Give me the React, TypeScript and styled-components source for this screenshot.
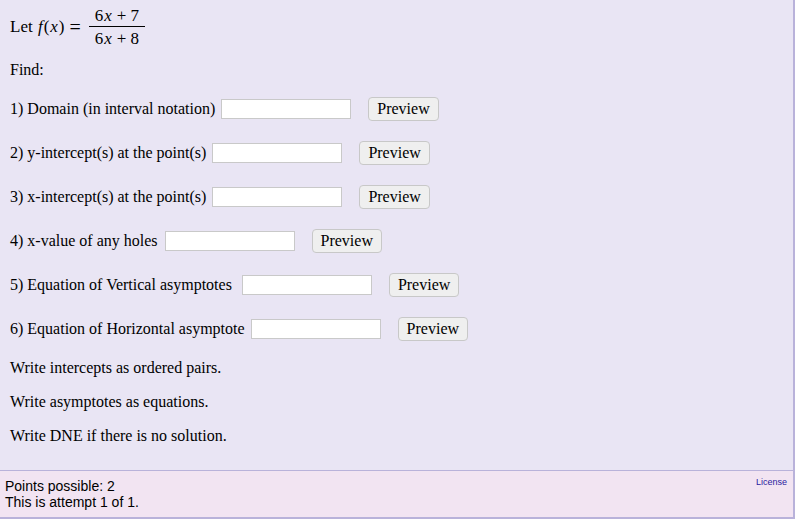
import React from 'react'
import styled, { createGlobalStyle } from 'styled-components'

const GlobalStyle = createGlobalStyle`
  html, body {
    margin: 0;
    padding: 0;
    background: #ffffff;
  }
  body {
    font-family: "Liberation Serif", "Times New Roman", serif;
    font-size: 16px;
    color: #000;
  }
`

const Frame = styled.div`
  width: 793px;
  height: 517px;
  border-right: 2px solid #b9b2da;
  border-bottom: 2px solid #b9b2da;
  background: #e9e5f4;
  display: flex;
  flex-direction: column;
`

const Question = styled.div`
  height: 470px;
  padding-left: 10px;
  display: flex;
  flex-direction: column;
  box-sizing: border-box;
`

const Statement = styled.div`
  display: flex;
  align-items: center;
  height: 42px;
  margin-top: 6px;
`

const MathText = styled.span`
  font-family: "Liberation Serif", "Times New Roman", serif;
  font-size: 17px;
`

const Italic = styled.i`
  font-style: italic;
  padding: 0 1px;
`

const Equals = styled.span`
  font-size: 20px;
  margin: 0 8px 0 5px;
`

const Fraction = styled.span`
  display: inline-flex;
  flex-direction: column;
  align-items: center;
  font-size: 17px;
  line-height: 19px;
`

const Op = styled.span`
  margin: 0 4px;
`

const Bar = styled.span`
  display: block;
  width: 56px;
  height: 1px;
  background: #000;
  margin: 1px 0 2px;
`

const Line = styled.div<{ top: number }>`
  line-height: 20px;
  margin-top: ${p => p.top}px;
`

const Row = styled.div<{ top: number }>`
  display: flex;
  align-items: center;
  height: 28px;
  margin-top: ${p => p.top}px;
`

const Label = styled.span<{ space: number }>`
  margin-right: ${p => p.space}px;
  white-space: nowrap;
`

const Field = styled.input`
  width: 130px;
  height: 20px;
  box-sizing: border-box;
  border: 1px solid #c9c9c9;
  background: #fff;
  margin: 0 17px 0 0;
  padding: 0;
`

const PreviewButton = styled.button`
  font-family: "Liberation Serif", "Times New Roman", serif;
  font-size: 16px;
  height: 24px;
  padding: 0 8px;
  background: #efefef;
  border: 1px solid #c8c8c8;
  border-radius: 4px;
  color: #000;
`

const Footer = styled.div`
  flex: 1;
  background: #f2e4f2;
  border-top: 1px solid #b9b2da;
  display: flex;
  justify-content: space-between;
  padding: 5px 6px 0 5px;
  font-family: "Liberation Sans", Arial, sans-serif;
`

const Attempt = styled.div`
  font-size: 14px;
  line-height: 16px;
  padding-top: 2px;
`

const License = styled.a`
  font-size: 9px;
  color: #2a22a0;
  text-decoration: none;
  line-height: 12px;
`

const rows = [
  { label: '1) Domain (in interval notation)', space: 6 },
  { label: '2) y-intercept(s) at the point(s)', space: 6 },
  { label: '3) x-intercept(s) at the point(s)', space: 6 },
  { label: '4) x-value of any holes', space: 7 },
  { label: '5) Equation of Vertical asymptotes', space: 10 },
  { label: '6) Equation of Horizontal asymptote', space: 6 },
]

export default function App() {
  return (
    <>
      <GlobalStyle />
      <Frame>
        <Question>
          <Statement>
            <MathText>
              Let <Italic>f</Italic>(<Italic>x</Italic>)
            </MathText>
            <Equals>=</Equals>
            <Fraction>
              <span>
                6<Italic>x</Italic>
                <Op>+</Op>7
              </span>
              <Bar />
              <span>
                6<Italic>x</Italic>
                <Op>+</Op>8
              </span>
            </Fraction>
          </Statement>
          <Line top={12}>Find:</Line>
          {rows.map((r, i) => (
            <Row key={i} top={i === 0 ? 15 : 16}>
              <Label space={r.space}>{r.label}</Label>
              <Field type="text" />
              <PreviewButton>Preview</PreviewButton>
            </Row>
          ))}
          <Line top={15}>Write intercepts as ordered pairs.</Line>
          <Line top={14}>Write asymptotes as equations.</Line>
          <Line top={14}>Write DNE if there is no solution.</Line>
        </Question>
        <Footer>
          <Attempt>
            Points possible: 2
            <br />
            This is attempt 1 of 1.
          </Attempt>
          <License href="#">License</License>
        </Footer>
      </Frame>
    </>
  )
}
